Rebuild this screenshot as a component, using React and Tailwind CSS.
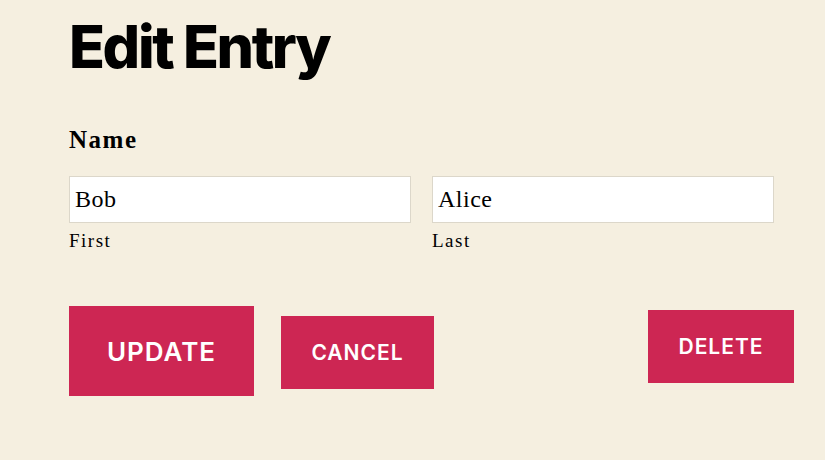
export default function App() {
  const serif = { fontFamily: '"Liberation Serif", "Times New Roman", serif' };

  return (
    <div className="min-h-screen bg-[#f5efe0] pl-[69px] pr-[31px] text-black">
      <h1 className="pt-[17px] font-['Inter',sans-serif] text-[59px] font-extrabold leading-none tracking-[-0.04em]">
        Edit Entry
      </h1>

      <form className="mt-[51px]" style={serif} onSubmit={(e) => e.preventDefault()}>
        <label className="block text-[25px] font-bold leading-none tracking-[1.5px]">Name</label>

        <div className="mt-[24px] flex gap-[21px]">
          <div className="w-[342px]">
            <input
              type="text"
              defaultValue="Bob"
              className="block h-[47px] w-full border border-[#dcd7ca] bg-white px-[5px] text-[24px] tracking-[0.5px] outline-none"
            />
            <span className="mt-[8px] block text-[19px] leading-none tracking-[1.5px]">First</span>
          </div>
          <div className="w-[342px]">
            <input
              type="text"
              defaultValue="Alice"
              className="block h-[47px] w-full border border-[#dcd7ca] bg-white px-[5px] text-[24px] tracking-[0.5px] outline-none"
            />
            <span className="mt-[8px] block text-[19px] leading-none tracking-[1.5px]">Last</span>
          </div>
        </div>

        <div className="mt-[56px] flex items-start font-['Inter',sans-serif] font-semibold text-white">
          <button className="flex h-[90px] w-[185px] items-center justify-center bg-[#cd2653] text-[26px] uppercase tracking-[1px]">
            Update
          </button>
          <button
            type="button"
            className="ml-[27px] mt-[10px] flex h-[73px] w-[153px] items-center justify-center bg-[#cd2653] text-[21px] uppercase tracking-[1px]"
          >
            Cancel
          </button>
          <button
            type="button"
            className="ml-auto mt-[4px] flex h-[73px] w-[146px] items-center justify-center bg-[#cd2653] text-[21px] uppercase tracking-[1px]"
          >
            Delete
          </button>
        </div>
      </form>
    </div>
  );
}
